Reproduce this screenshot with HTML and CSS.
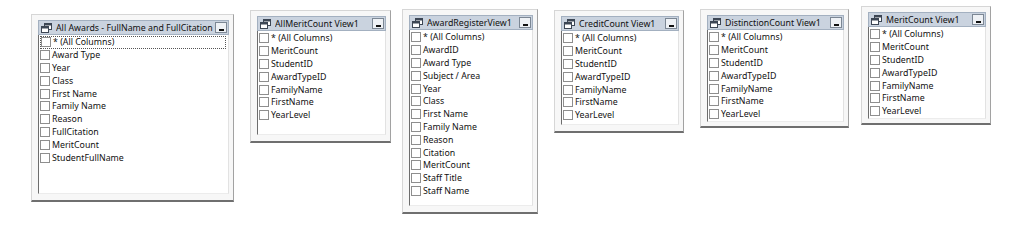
FILE: index.html
```html
<!DOCTYPE html>
<html lang="en">
<head>
    <meta charset="UTF-8">
    <meta name="viewport" content="width=device-width, initial-scale=1.0">
    <title>Query Designer - Tables</title>
    <link rel="stylesheet" href="styles.css">
</head>
<body>
    <div class="desk">
        <div class="table t-awards">
            <div class="title">
                <svg class="ticon" viewBox="0 0 11 10"><rect x="3.5" y="0.5" width="7" height="6" fill="#fff" stroke="#3c4654"/><rect x="3.5" y="0.5" width="7" height="2" fill="#3c4654"/><rect x="0.5" y="3.5" width="7" height="6" fill="#fff" stroke="#3c4654"/><rect x="0.5" y="3.5" width="7" height="2" fill="#3c4654"/></svg>
                <span class="name">All Awards - FullName and FullCitation</span>
                <span class="min"></span>
            </div>
            <ul class="cols">
                <li class="focus"><span class="box"></span>* (All Columns)</li>
                <li><span class="box"></span>Award Type</li>
                <li><span class="box"></span>Year</li>
                <li><span class="box"></span>Class</li>
                <li><span class="box"></span>First Name</li>
                <li><span class="box"></span>Family Name</li>
                <li><span class="box"></span>Reason</li>
                <li><span class="box"></span>FullCitation</li>
                <li><span class="box"></span>MeritCount</li>
                <li><span class="box"></span>StudentFullName</li>
            </ul>
        </div>

        <div class="table t-allmerit">
            <div class="title">
                <svg class="ticon" viewBox="0 0 11 10"><rect x="3.5" y="0.5" width="7" height="6" fill="#fff" stroke="#3c4654"/><rect x="3.5" y="0.5" width="7" height="2" fill="#3c4654"/><rect x="0.5" y="3.5" width="7" height="6" fill="#fff" stroke="#3c4654"/><rect x="0.5" y="3.5" width="7" height="2" fill="#3c4654"/></svg>
                <span class="name">AllMeritCount View1</span>
                <span class="min"></span>
            </div>
            <ul class="cols">
                <li><span class="box"></span>* (All Columns)</li>
                <li><span class="box"></span>MeritCount</li>
                <li><span class="box"></span>StudentID</li>
                <li><span class="box"></span>AwardTypeID</li>
                <li><span class="box"></span>FamilyName</li>
                <li><span class="box"></span>FirstName</li>
                <li><span class="box"></span>YearLevel</li>
            </ul>
        </div>

        <div class="table t-register">
            <div class="title">
                <svg class="ticon" viewBox="0 0 11 10"><rect x="3.5" y="0.5" width="7" height="6" fill="#fff" stroke="#3c4654"/><rect x="3.5" y="0.5" width="7" height="2" fill="#3c4654"/><rect x="0.5" y="3.5" width="7" height="6" fill="#fff" stroke="#3c4654"/><rect x="0.5" y="3.5" width="7" height="2" fill="#3c4654"/></svg>
                <span class="name">AwardRegisterView1</span>
                <span class="min"></span>
            </div>
            <ul class="cols">
                <li><span class="box"></span>* (All Columns)</li>
                <li><span class="box"></span>AwardID</li>
                <li><span class="box"></span>Award Type</li>
                <li><span class="box"></span>Subject / Area</li>
                <li><span class="box"></span>Year</li>
                <li><span class="box"></span>Class</li>
                <li><span class="box"></span>First Name</li>
                <li><span class="box"></span>Family Name</li>
                <li><span class="box"></span>Reason</li>
                <li><span class="box"></span>Citation</li>
                <li><span class="box"></span>MeritCount</li>
                <li><span class="box"></span>Staff Title</li>
                <li><span class="box"></span>Staff Name</li>
            </ul>
        </div>

        <div class="table t-credit">
            <div class="title">
                <svg class="ticon" viewBox="0 0 11 10"><rect x="3.5" y="0.5" width="7" height="6" fill="#fff" stroke="#3c4654"/><rect x="3.5" y="0.5" width="7" height="2" fill="#3c4654"/><rect x="0.5" y="3.5" width="7" height="6" fill="#fff" stroke="#3c4654"/><rect x="0.5" y="3.5" width="7" height="2" fill="#3c4654"/></svg>
                <span class="name">CreditCount View1</span>
                <span class="min"></span>
            </div>
            <ul class="cols">
                <li><span class="box"></span>* (All Columns)</li>
                <li><span class="box"></span>MeritCount</li>
                <li><span class="box"></span>StudentID</li>
                <li><span class="box"></span>AwardTypeID</li>
                <li><span class="box"></span>FamilyName</li>
                <li><span class="box"></span>FirstName</li>
                <li><span class="box"></span>YearLevel</li>
            </ul>
        </div>

        <div class="table t-distinction">
            <div class="title">
                <svg class="ticon" viewBox="0 0 11 10"><rect x="3.5" y="0.5" width="7" height="6" fill="#fff" stroke="#3c4654"/><rect x="3.5" y="0.5" width="7" height="2" fill="#3c4654"/><rect x="0.5" y="3.5" width="7" height="6" fill="#fff" stroke="#3c4654"/><rect x="0.5" y="3.5" width="7" height="2" fill="#3c4654"/></svg>
                <span class="name">DistinctionCount View1</span>
                <span class="min"></span>
            </div>
            <ul class="cols">
                <li><span class="box"></span>* (All Columns)</li>
                <li><span class="box"></span>MeritCount</li>
                <li><span class="box"></span>StudentID</li>
                <li><span class="box"></span>AwardTypeID</li>
                <li><span class="box"></span>FamilyName</li>
                <li><span class="box"></span>FirstName</li>
                <li><span class="box"></span>YearLevel</li>
            </ul>
        </div>

        <div class="table t-merit">
            <div class="title">
                <svg class="ticon" viewBox="0 0 11 10"><rect x="3.5" y="0.5" width="7" height="6" fill="#fff" stroke="#3c4654"/><rect x="3.5" y="0.5" width="7" height="2" fill="#3c4654"/><rect x="0.5" y="3.5" width="7" height="6" fill="#fff" stroke="#3c4654"/><rect x="0.5" y="3.5" width="7" height="2" fill="#3c4654"/></svg>
                <span class="name">MeritCount View1</span>
                <span class="min"></span>
            </div>
            <ul class="cols">
                <li><span class="box"></span>* (All Columns)</li>
                <li><span class="box"></span>MeritCount</li>
                <li><span class="box"></span>StudentID</li>
                <li><span class="box"></span>AwardTypeID</li>
                <li><span class="box"></span>FamilyName</li>
                <li><span class="box"></span>FirstName</li>
                <li><span class="box"></span>YearLevel</li>
            </ul>
        </div>
    </div>
</body>
</html>
```

FILE: styles.css
```css
body {
    margin: 0;
    background-color: #fff;
    font-family: "Noto Sans", "Liberation Sans", sans-serif;
    font-size: 8.8px;
    color: #111;
}
.desk {
    position: relative;
    width: 1024px;
    height: 240px;
}
/* each table window sits where it was dropped on the designer */
.table {
    position: absolute;
    box-sizing: border-box;
    display: flex;
    flex-direction: column;
    background-color: #f7f7f7;
    border: 1px solid #d6d6d6;
    border-right-color: #a2a2a2;
    border-bottom: 2px solid #6f6f6f;
    padding: 5px 4px 6px 6px;
}
.t-awards { left: 31px; top: 14px; width: 203px; height: 188px; }
.t-allmerit { left: 250px; top: 10px; width: 141px; height: 133px; }
.t-register { left: 402px; top: 9px; width: 136px; height: 205px; }
.t-credit { left: 554px; top: 10px; width: 130px; height: 123px; }
.t-distinction { left: 700px; top: 9px; width: 149px; height: 119px; }
.t-merit { left: 861px; top: 6px; width: 130px; height: 119px; }

.title {
    display: flex;
    align-items: center;
    flex: none;
    height: 15px;
    box-sizing: border-box;
    background-color: #cad3df;
    border: 1px solid #a3b0c0;
    padding: 0 1px 0 2px;
}
.ticon {
    width: 11px;
    height: 10px;
    flex: none;
    margin-right: 4px;
}
.name {
    white-space: nowrap;
    overflow: hidden;
}
.min {
    position: relative;
    flex: none;
    margin-left: auto;
    width: 12px;
    height: 11px;
    box-sizing: border-box;
    border: 1px solid #7c8794;
    background-color: #eef1f5;
}
.min::after {
    content: "";
    position: absolute;
    left: 3px;
    bottom: 1px;
    width: 5px;
    height: 2px;
    background-color: #111;
}
.cols {
    flex: 1;
    margin: 0;
    padding: 1px 2px 0 1px;
    list-style: none;
    background-color: #fff;
    border-left: 1px solid #6d6d6d;
    border-right: 1px solid #e2e2e2;
    border-bottom: 1px solid #ececec;
}
.cols li {
    display: flex;
    align-items: center;
    height: 12.8px;
    box-sizing: border-box;
    white-space: nowrap;
}
.cols li.focus {
    border: 1px dotted #555;
}
.box {
    flex: none;
    width: 10px;
    height: 10px;
    box-sizing: border-box;
    border: 1px solid #8e8e8e;
    background-color: #fff;
    margin-right: 2px;
}
```
